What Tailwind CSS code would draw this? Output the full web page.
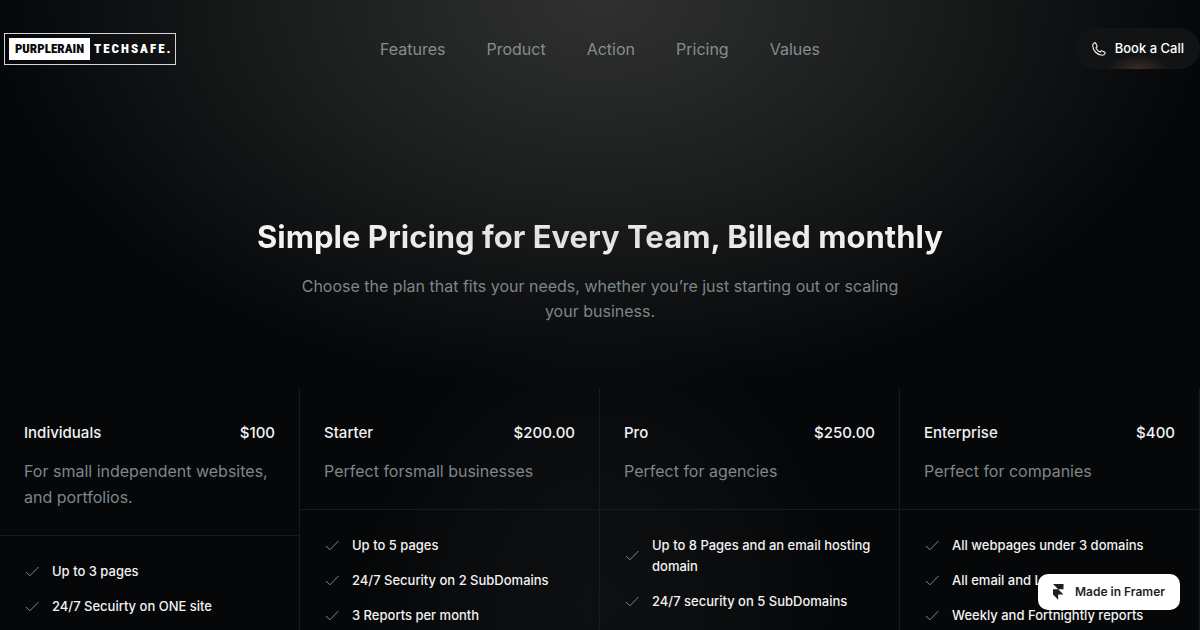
<!DOCTYPE html>
<html lang="en">
<head>
    <meta charset="UTF-8">
    <meta name="viewport" content="width=device-width, initial-scale=1.0">
    <title>Purplerain Techsafe - Pricing</title>
    <script src="https://cdn.jsdelivr.net/npm/@tailwindcss/browser@4"></script>
</head>
<body class="min-h-screen bg-[#060709] font-['Inter',sans-serif] text-[#f2f2f2]">
    <!-- Check icon shared by the plan lists -->
    <svg class="hidden" aria-hidden="true">
        <symbol id="check" viewBox="0 0 16 16">
            <path d="M2 8 5.900 11.800 14.400 3" fill="none" stroke="currentColor" stroke-width="1"/>
        </symbol>
    </svg>

    <div class="min-h-screen bg-[radial-gradient(600px_390px_at_50%_0px,#2f302f_0%,#262727_25%,#1c1d1d_50%,#111213_75%,transparent_100%),radial-gradient(230px_270px_at_50%_600px,#0e0f11_0%,#0b0c0e_60%,transparent_100%)]">
        <!-- Header -->
        <header class="grid grid-cols-[1fr_auto_1fr] items-center pt-7">
            <a href="#" class="ml-1 flex h-8 w-[172px] items-center justify-self-start border border-[#d4d5d6] pl-1 font-['Roboto_Condensed','Roboto',sans-serif] text-[13px] font-black">
                <span class="flex h-[22px] w-[81px] items-center justify-center bg-white text-[#0b0c0d]">PURPLERAIN</span>
                <span class="ml-1 tracking-[2px] text-white">TECHSAFE.</span>
            </a>
            <nav class="flex gap-[41px] text-base text-[#868d92]">
                <a href="#">Features</a>
                <a href="#">Product</a>
                <a href="#">Action</a>
                <a href="#">Pricing</a>
                <a href="#">Values</a>
            </nav>
            <button type="button" class="flex h-[41px] items-center gap-2 justify-self-end rounded-full bg-[#121314] bg-[radial-gradient(32px_14px_at_50%_100%,#3b2c24_0%,transparent_100%)] px-4 text-[13px] font-medium text-white">
                <svg class="size-4" viewBox="0 0 16 16" fill="none" stroke="currentColor" stroke-width="1.1" stroke-linejoin="round" aria-hidden="true">
                    <path d="M4.6 2.1 6 4.9c.2.5.1 1-.3 1.3l-.8.7c.8 1.9 2.2 3.4 4.1 4.2l.8-.9c.3-.4.9-.5 1.3-.3l2.4 1.1c.5.2.7.7.6 1.2-.3 1.3-1.400 2-2.700 2C6.200 14.200 1.700 9.600 1.700 4.500c0-1.400.8-2.500 2-2.800.4-.1.700.1.900.400Z"/>
                </svg>
                Book a Call
            </button>
        </header>

        <!-- Heading -->
        <section class="mx-auto max-w-[700px] pt-[147px] text-center">
            <h1 class="bg-[radial-gradient(closest-side,#dcdcdc,#f4f4f4)] bg-clip-text text-[31px] leading-[42px] font-bold text-transparent">Simple Pricing for Every Team, Billed monthly</h1>
            <p class="mx-auto mt-4 max-w-[600px] text-base leading-[25px] text-[#7d868b]">Choose the plan that fits your needs, whether you’re just starting out or scaling your business.</p>
        </section>

        <!-- Plans -->
        <main class="mt-16 grid grid-cols-4">
            <section class="border-r border-[#191a1c]">
                <div class="border-b border-[#191a1c] px-6 pt-8 pb-[25px]">
                    <div class="flex justify-between text-[15px] leading-[26px] font-medium">
                        <h2>Individuals</h2>
                        <p>$100</p>
                    </div>
                    <p class="mt-3 text-base leading-[26px] text-[#7d868b]">For small independent websites, and portfolios.</p>
                </div>
                <ul class="flex flex-col gap-[14px] px-6 py-[25px] text-[13px] leading-[21px] font-medium">
                    <li class="flex items-center gap-3"><svg class="size-4 shrink-0 text-[#7d868b]"><use href="#check"/></svg>Up to 3 pages</li>
                    <li class="flex items-center gap-3"><svg class="size-4 shrink-0 text-[#7d868b]"><use href="#check"/></svg>24/7 Secuirty on ONE site</li>
                </ul>
            </section>
            <section class="border-r border-[#191a1c]">
                <div class="border-b border-[#191a1c] px-6 pt-8 pb-[25px]">
                    <div class="flex justify-between text-[15px] leading-[26px] font-medium">
                        <h2>Starter</h2>
                        <p>$200.00</p>
                    </div>
                    <p class="mt-3 text-base leading-[26px] text-[#7d868b]">Perfect forsmall businesses</p>
                </div>
                <ul class="flex flex-col gap-[14px] px-6 py-[25px] text-[13px] leading-[21px] font-medium">
                    <li class="flex items-center gap-3"><svg class="size-4 shrink-0 text-[#7d868b]"><use href="#check"/></svg>Up to 5 pages</li>
                    <li class="flex items-center gap-3"><svg class="size-4 shrink-0 text-[#7d868b]"><use href="#check"/></svg>24/7 Security on 2 SubDomains</li>
                    <li class="flex items-center gap-3"><svg class="size-4 shrink-0 text-[#7d868b]"><use href="#check"/></svg>3 Reports per month</li>
                </ul>
            </section>
            <section class="border-r border-[#191a1c]">
                <div class="border-b border-[#191a1c] px-6 pt-8 pb-[25px]">
                    <div class="flex justify-between text-[15px] leading-[26px] font-medium">
                        <h2>Pro</h2>
                        <p>$250.00</p>
                    </div>
                    <p class="mt-3 text-base leading-[26px] text-[#7d868b]">Perfect for agencies</p>
                </div>
                <ul class="flex flex-col gap-[14px] px-6 py-[25px] text-[13px] leading-[21px] font-medium">
                    <li class="flex items-center gap-3"><svg class="size-4 shrink-0 text-[#7d868b]"><use href="#check"/></svg>Up to 8 Pages and an email hosting domain</li>
                    <li class="flex items-center gap-3"><svg class="size-4 shrink-0 text-[#7d868b]"><use href="#check"/></svg>24/7 security on 5 SubDomains</li>
                </ul>
            </section>
            <section class="border-r border-[#191a1c]">
                <div class="border-b border-[#191a1c] px-6 pt-8 pb-[25px]">
                    <div class="flex justify-between text-[15px] leading-[26px] font-medium">
                        <h2>Enterprise</h2>
                        <p>$400</p>
                    </div>
                    <p class="mt-3 text-base leading-[26px] text-[#7d868b]">Perfect for companies</p>
                </div>
                <ul class="flex flex-col gap-[14px] px-6 py-[25px] text-[13px] leading-[21px] font-medium">
                    <li class="flex items-center gap-3"><svg class="size-4 shrink-0 text-[#7d868b]"><use href="#check"/></svg>All webpages under 3 domains</li>
                    <li class="flex items-center gap-3"><svg class="size-4 shrink-0 text-[#7d868b]"><use href="#check"/></svg>All email and Logins</li>
                    <li class="flex items-center gap-3"><svg class="size-4 shrink-0 text-[#7d868b]"><use href="#check"/></svg>Weekly and Fortnightly reports</li>
                </ul>
            </section>
        </main>
    </div>

    <!-- Framer badge -->
    <a href="#" class="fixed right-5 bottom-5 flex h-9 items-center gap-[10px] rounded-[10px] bg-white px-[15px] text-xs font-semibold text-[#1f1f1f]">
        <svg class="h-4 w-3" viewBox="0 0 12 16" fill="currentColor" aria-hidden="true">
            <path d="M0 0h10.500v5.300H5.200L0 0ZM0 5.300h5.200l5.300 5.200H5.200v5.300L0 10.500V5.300Z"/>
        </svg>
        Made in Framer
    </a>
</body>
</html>
